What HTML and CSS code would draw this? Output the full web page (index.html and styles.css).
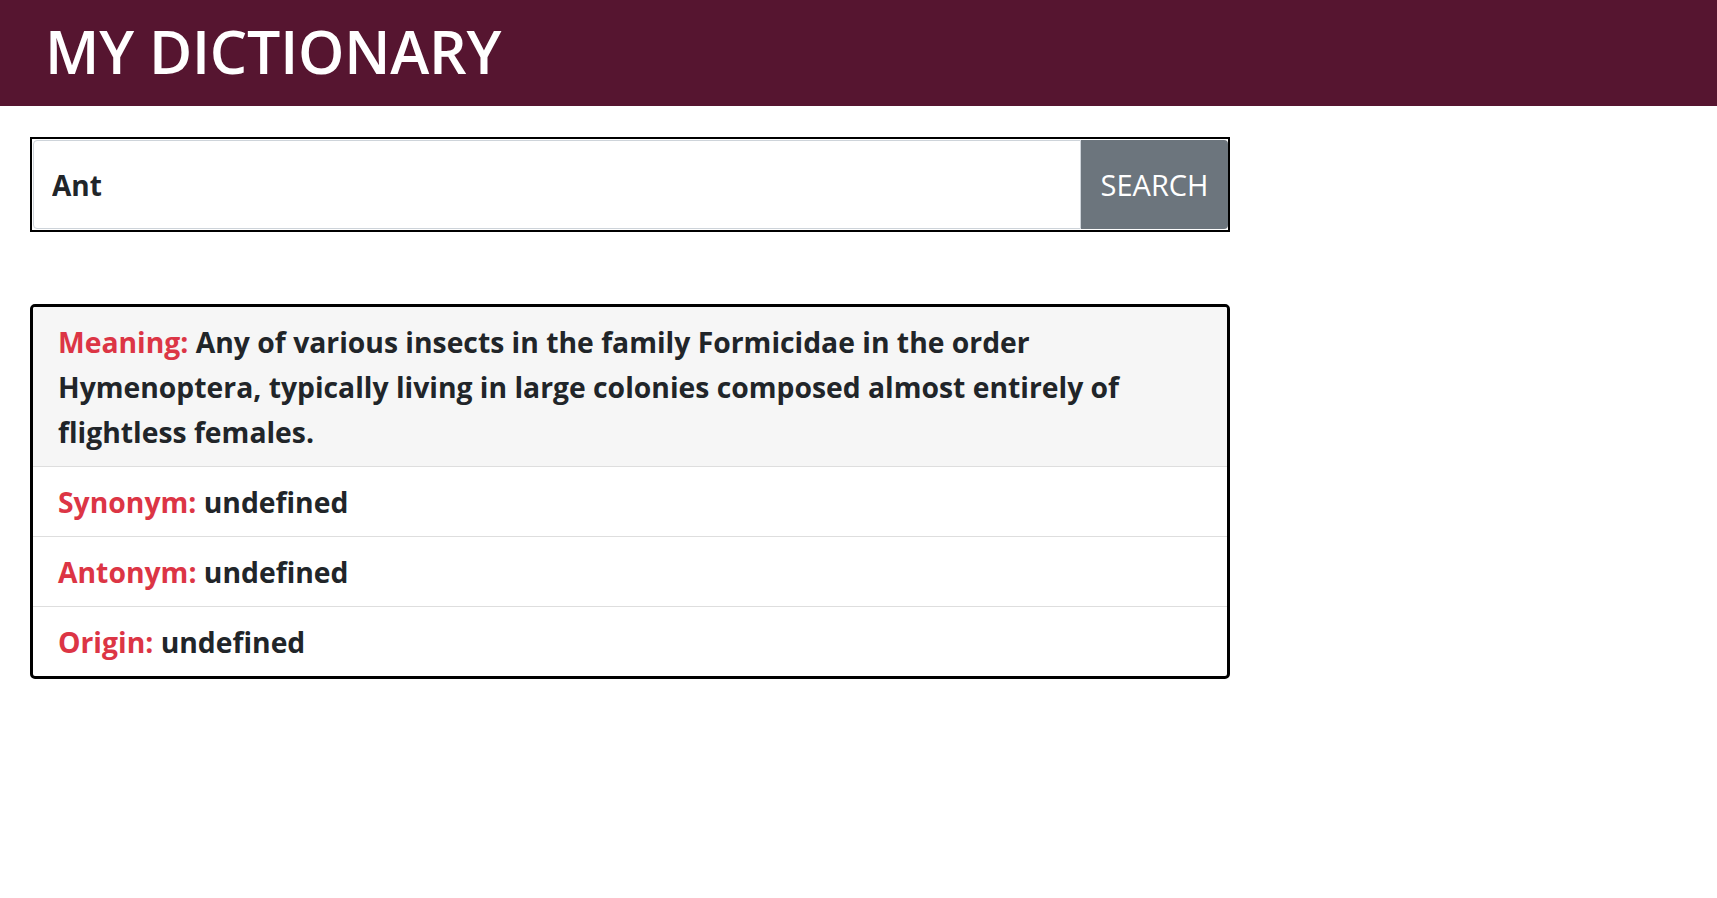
FILE: index.html
```html
<!DOCTYPE html>
<html lang="en">
<head>
<meta charset="utf-8">
<title>My Dictionary</title>
<link rel="stylesheet" href="styles.css">
</head>
<body>
<header class="topbar">
  <h1 class="title">MY DICTIONARY</h1>
</header>
<main class="content">
  <form class="search">
    <input class="search-input" type="text" value="Ant">
    <button class="search-btn" type="button">SEARCH</button>
  </form>
  <ul class="results">
    <li class="row row-meaning"><span class="label">Meaning:</span> Any of various insects in the family Formicidae in the order Hymenoptera, typically living in large colonies composed almost entirely of flightless females.</li>
    <li class="row"><span class="label">Synonym:</span> undefined</li>
    <li class="row"><span class="label">Antonym:</span> undefined</li>
    <li class="row"><span class="label">Origin:</span> undefined</li>
  </ul>
</main>
</body>
</html>
```

FILE: styles.css
```css
* { box-sizing: border-box; }
html, body { margin: 0; padding: 0; background: #fff; }
body {
  font-family: "Open Sans", "Noto Sans", "Liberation Sans", sans-serif;
  color: #212529;
}
.topbar {
  background: #561530;
  height: 106px;
  display: flex;
  align-items: center;
  padding-left: 45px;
}
.title {
  margin: 0 0 4px 0;
  color: #fff;
  font-size: 59px;
  font-weight: 600;
  letter-spacing: -0.2px;
  line-height: 1;
}
.content {
  padding: 31px 0 0 30px;
  width: 1230px;
}
.search {
  display: flex;
  border: 2px solid #000;
  height: 95px;
  margin: 0;
}
.search-input {
  flex: 1;
  min-width: 0;
  border: 1px solid #ced4da;
  border-radius: 4px 0 0 4px;
  padding: 0 18px;
  font-family: inherit;
  font-size: 28px;
  font-weight: 700;
  color: #212529;
  outline: none;
  margin: 1px 0 1px 1px;
}
.search-btn {
  width: 147px;
  background: #6c757d;
  color: #fff;
  border: none;
  border-radius: 0 4px 4px 0;
  font-family: inherit;
  font-size: 29px;
  font-weight: 400;
  margin: 1px 0 1px 0;
  padding: 0;
}
.results {
  list-style: none;
  margin: 72px 0 0 0;
  padding: 0;
  border: 3px solid #000;
  border-radius: 5px;
  overflow: hidden;
}
.row {
  padding: 13px 25px 11px 25px;
  font-size: 28.3px;
  font-weight: 700;
  line-height: 45px;
  border-top: 1px solid #dedede;
}
.row:first-child { border-top: none; }
.row-meaning {
  background: #f6f6f6;
  padding-top: 13px;
  padding-bottom: 11px;
}
.label { color: #dc3545; }
```
